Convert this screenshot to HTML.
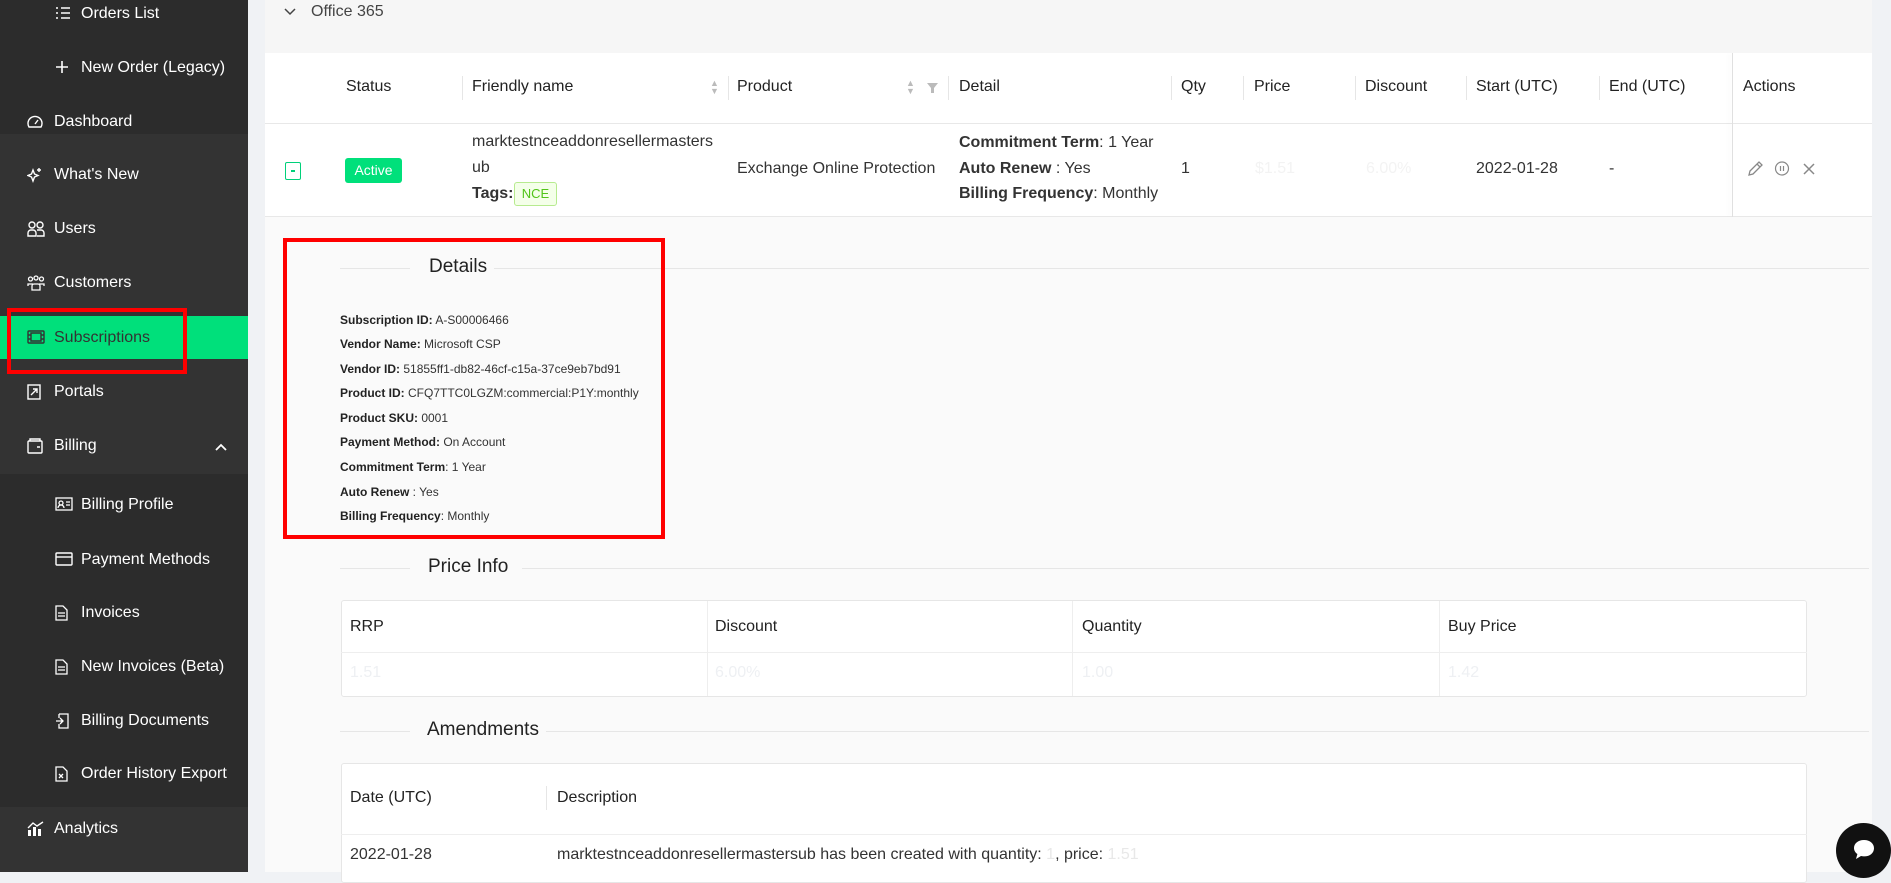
<!DOCTYPE html>
<html><head><meta charset="utf-8"><style>
*{margin:0;padding:0;box-sizing:border-box}
body{width:1891px;height:872px;overflow:hidden;background:#f0f2f5;font-family:"Liberation Sans",sans-serif;color:#222;position:relative}
.a{position:absolute;white-space:nowrap}
#sb{position:absolute;left:0;top:0;width:248px;height:872px;background:#333}
.si{position:absolute;left:0;width:248px;height:44px;color:#fff;font-size:16px;line-height:44px}
.si svg{position:absolute;top:14px}
.hd{font-size:16px;color:#222}
.sep{position:absolute;width:1px;background:#e6e6e6}
.dl{font-size:12px;color:#333}
.dl b{color:#222}
</style></head><body>
<div id="sb">
 <div class="a" style="left:0;top:0;width:248px;height:134px;background:#2c2c2c"></div>
 <div class="a" style="left:0;top:474px;width:248px;height:333px;background:#2c2c2c"></div>
 <div class="si" style="top:-8px"><svg style="left:55px" width="16" height="14" viewBox="0 0 16 14" fill="none" stroke="#fff" stroke-width="1.6"><path d="M1 2h2M6 2h9M1 7h2M6 7h9M1 12h2M6 12h9"/></svg><span style="position:absolute;left:81px">Orders List</span></div>
 <div class="si" style="top:46px"><svg style="left:55px" width="14" height="14" viewBox="0 0 14 14" stroke="#fff" stroke-width="1.6"><path d="M7 1v12M1 7h12"/></svg><span style="position:absolute;left:81px">New Order (Legacy)</span></div>
 <div class="si" style="top:100px"><svg style="left:27px" width="16" height="16" viewBox="0 0 16 16" fill="none" stroke="#fff" stroke-width="1.4"><path d="M2 13a7 7 0 1 1 12 0z"/><path d="M8 10l3-4"/></svg><span style="position:absolute;left:54px">Dashboard</span></div>
 <div class="si" style="top:153px"><svg style="left:27px" width="16" height="16" viewBox="0 0 16 16" fill="none" stroke="#fff" stroke-width="1.4"><path d="M6 3l1.5 4L11 8.5 7.5 10 6 14 4.5 10 1 8.5 4.5 7z"/><path d="M12 1v4M10 3h4"/></svg><span style="position:absolute;left:54px">What's New</span></div>
 <div class="si" style="top:207px"><svg style="left:27px" width="18" height="16" viewBox="0 0 18 16" fill="none" stroke="#fff" stroke-width="1.4"><circle cx="5" cy="4" r="3"/><circle cx="13" cy="4" r="3"/><path d="M1 15v-3a3 3 0 0 1 3-3h2a3 3 0 0 1 3 3v3zM10 9h4a3 3 0 0 1 3 3v3h-7"/></svg><span style="position:absolute;left:54px">Users</span></div>
 <div class="si" style="top:261px"><svg style="left:27px" width="18" height="16" viewBox="0 0 18 16" fill="none" stroke="#fff" stroke-width="1.3"><circle cx="3.5" cy="4" r="2"/><circle cx="9" cy="3" r="2"/><circle cx="14.5" cy="4" r="2"/><path d="M1 11v-2h5M12 9h5v2M5 15v-4a2 2 0 0 1 2-2h4a2 2 0 0 1 2 2v4z"/></svg><span style="position:absolute;left:54px">Customers</span></div>
 <div class="a" style="left:0;top:316px;width:248px;height:43px;background:#00e07b"></div>
 <div class="si" style="top:316px;color:#333"><svg style="left:27px" width="18" height="14" viewBox="0 0 18 14" fill="none" stroke="#333" stroke-width="1.4"><rect x="1" y="1" width="16" height="12" rx="1"/><path d="M1 5h3M14 5h3M1 9h3M14 9h3M4 3h10v8H4z"/></svg><span style="position:absolute;left:54px">Subscriptions</span></div>
 <div class="a" style="left:7px;top:308px;width:180px;height:66px;border:4px solid #f00"></div>
 <div class="si" style="top:370px"><svg style="left:27px" width="14" height="16" viewBox="0 0 14 16" fill="none" stroke="#fff" stroke-width="1.4"><rect x="1" y="1" width="12" height="14"/><path d="M4 11l6-6M6 5h4v4"/></svg><span style="position:absolute;left:54px">Portals</span></div>
 <div class="si" style="top:424px"><svg style="left:27px" width="16" height="16" viewBox="0 0 16 16" fill="none" stroke="#fff" stroke-width="1.4"><rect x="1" y="3" width="14" height="12" rx="1"/><path d="M3 3V1h10v2M10 9h3"/></svg><span style="position:absolute;left:54px">Billing</span><svg style="left:215px;top:19px" width="12" height="8" viewBox="0 0 12 8" fill="none" stroke="#fff" stroke-width="1.8"><path d="M1 7l5-5 5 5"/></svg></div>
 <div class="si" style="top:483px"><svg style="left:55px" width="18" height="14" viewBox="0 0 18 14" fill="none" stroke="#fff" stroke-width="1.3"><rect x="1" y="1" width="16" height="12"/><circle cx="6" cy="6" r="2"/><path d="M3 11a3 3 0 0 1 6 0M11 5h4M11 8h4"/></svg><span style="position:absolute;left:81px">Billing Profile</span></div>
 <div class="si" style="top:538px"><svg style="left:55px" width="18" height="14" viewBox="0 0 18 14" fill="none" stroke="#fff" stroke-width="1.4"><rect x="1" y="1" width="16" height="12" rx="1"/><path d="M1 5h16"/></svg><span style="position:absolute;left:81px">Payment Methods</span></div>
 <div class="si" style="top:591px"><svg style="left:55px" width="13" height="16" viewBox="0 0 13 16" fill="none" stroke="#fff" stroke-width="1.3"><path d="M1 1h7l4 4v10H1z"/><path d="M3 8h7M3 11h7"/></svg><span style="position:absolute;left:81px">Invoices</span></div>
 <div class="si" style="top:645px"><svg style="left:55px" width="13" height="16" viewBox="0 0 13 16" fill="none" stroke="#fff" stroke-width="1.3"><path d="M1 1h7l4 4v10H1z"/><path d="M3 8h7M3 11h7"/></svg><span style="position:absolute;left:81px">New Invoices (Beta)</span></div>
 <div class="si" style="top:699px"><svg style="left:55px" width="14" height="16" viewBox="0 0 14 16" fill="none" stroke="#fff" stroke-width="1.3"><path d="M4 1h9v14H4v-4M4 5V1"/><path d="M1 8h7M5 5l3 3-3 3"/></svg><span style="position:absolute;left:81px">Billing Documents</span></div>
 <div class="si" style="top:752px"><svg style="left:55px" width="13" height="16" viewBox="0 0 13 16" fill="none" stroke="#fff" stroke-width="1.3"><path d="M1 1h7l4 4v10H1z"/><path d="M4 8l4 4M8 8l-4 4"/></svg><span style="position:absolute;left:81px">Order History Export</span></div>
 <div class="si" style="top:807px"><svg style="left:27px" width="18" height="16" viewBox="0 0 18 16" fill="#fff"><rect x="1" y="9" width="3" height="6"/><rect x="6" y="6" width="3" height="9"/><rect x="11" y="8" width="3" height="7"/><path d="M1 7l5-5 4 3 6-4" stroke="#fff" stroke-width="1.4" fill="none"/></svg><span style="position:absolute;left:54px">Analytics</span></div>
</div>

<div class="a" style="left:265px;top:0;width:1607px;height:872px;background:#fafafa"></div>
<div class="a" style="left:265px;top:0;width:1607px;height:53px;background:#f6f6f6"></div>
<svg class="a" style="left:284px;top:8px" width="12" height="8" viewBox="0 0 12 8" fill="none" stroke="#444" stroke-width="1.5"><path d="M1 1l5 5 5-5"/></svg>
<div class="a" style="left:311px;top:3px;font-size:16px;color:#444">Office 365</div>

<div class="a" style="left:265px;top:53px;width:1607px;height:164px;background:#fff;border-bottom:1px solid #e8e8e8"></div>
<div class="a" style="left:265px;top:123px;width:1607px;height:1px;background:#e8e8e8"></div>
<div class="a" style="left:1732px;top:53px;width:1px;height:164px;background:#e0e0e0;box-shadow:-3px 0 5px rgba(0,0,0,.06)"></div>
<div class="sep" style="left:462px;top:76px;height:24px"></div>
<div class="sep" style="left:728px;top:76px;height:24px"></div>
<div class="sep" style="left:948px;top:76px;height:24px"></div>
<div class="sep" style="left:1171px;top:76px;height:24px"></div>
<div class="sep" style="left:1243px;top:76px;height:24px"></div>
<div class="sep" style="left:1355px;top:76px;height:24px"></div>
<div class="sep" style="left:1466px;top:76px;height:24px"></div>
<div class="sep" style="left:1599px;top:76px;height:24px"></div>
<div class="a hd" style="left:346px;top:78px">Status</div>
<div class="a hd" style="left:472px;top:78px">Friendly name</div>
<div class="a" style="left:710px;top:79px;font-size:9px;color:#bbb;line-height:8px">▲<br>▼</div>
<div class="a hd" style="left:737px;top:78px">Product</div>
<div class="a" style="left:906px;top:79px;font-size:9px;color:#bbb;line-height:8px">▲<br>▼</div>
<svg class="a" style="left:927px;top:83px" width="11" height="10" viewBox="0 0 11 10" fill="#bbb"><path d="M0 0h11L7 5v5H4V5z"/></svg>
<div class="a hd" style="left:959px;top:78px">Detail</div>
<div class="a hd" style="left:1181px;top:78px">Qty</div>
<div class="a hd" style="left:1254px;top:78px">Price</div>
<div class="a hd" style="left:1365px;top:78px">Discount</div>
<div class="a hd" style="left:1476px;top:78px">Start (UTC)</div>
<div class="a hd" style="left:1609px;top:78px">End (UTC)</div>
<div class="a hd" style="left:1743px;top:78px">Actions</div>

<div class="a" style="left:285px;top:162px;width:16px;height:18px;border:1px solid #00d07a;border-radius:2px"></div>
<div class="a" style="left:291px;top:170px;width:4px;height:1.5px;background:#00d07a"></div>
<div class="a" style="left:345px;top:158px;width:57px;height:25px;background:#00e07b;border-radius:3px;color:#fff;font-size:14px;line-height:25px;text-align:center">Active</div>
<div class="a" style="left:472px;top:133px;font-size:16px;color:#333">marktestnceaddonresellermasters</div>
<div class="a" style="left:472px;top:159px;font-size:16px;color:#333">ub</div>
<div class="a" style="left:472px;top:185px;font-size:16px;font-weight:bold;color:#333">Tags:</div>
<div class="a" style="left:514px;top:182px;width:43px;height:24px;background:#f4ffe9;border:1px solid #b7eb8f;border-radius:3px;color:#52c41a;font-size:13px;line-height:22px;text-align:center">NCE</div>
<div class="a" style="left:737px;top:160px;font-size:16px;color:#333">Exchange Online Protection</div>
<div class="a" style="left:959px;top:134px;font-size:16px;color:#333"><b>Commitment Term</b>: 1 Year</div>
<div class="a" style="left:959px;top:160px;font-size:16px;color:#333"><b>Auto Renew</b> : Yes</div>
<div class="a" style="left:959px;top:185px;font-size:16px;color:#333"><b>Billing Frequency</b>: Monthly</div>
<div class="a" style="left:1181px;top:160px;font-size:16px;color:#333">1</div>
<div class="a" style="left:1255px;top:160px;font-size:16px;color:#f3f3f3">$1.51</div>
<div class="a" style="left:1366px;top:160px;font-size:16px;color:#f3f3f3">6.00%</div>
<div class="a" style="left:1476px;top:160px;font-size:16px;color:#333">2022-01-28</div>
<div class="a" style="left:1609px;top:160px;font-size:16px;color:#333">-</div>
<svg class="a" style="left:1747px;top:160px" width="16" height="17" viewBox="0 0 16 17" fill="none" stroke="#888" stroke-width="1.3"><path d="M2 15l1-4 9-9 3 3-9 9zM10 4l3 3"/></svg>
<svg class="a" style="left:1774px;top:160px" width="16" height="17" viewBox="0 0 16 17" fill="none" stroke="#888" stroke-width="1.2"><circle cx="8" cy="8.5" r="6.5"/><path d="M6.5 6v5M9.5 6v5"/></svg>
<svg class="a" style="left:1803px;top:163px" width="12" height="12" viewBox="0 0 12 12" stroke="#888" stroke-width="1.5"><path d="M1 1l10 10M11 1L1 11"/></svg>

<div class="a" style="left:340px;top:268px;width:70px;height:1px;background:#e6e6e6"></div>
<div class="a" style="left:494px;top:268px;width:1375px;height:1px;background:#e6e6e6"></div>
<div class="a" style="left:429px;top:256px;font-size:19px;color:#222">Details</div>
<div class="a dl" style="left:340px;top:313px"><b>Subscription ID:</b> A-S00006466</div>
<div class="a dl" style="left:340px;top:337px"><b>Vendor Name:</b> Microsoft CSP</div>
<div class="a dl" style="left:340px;top:362px"><b>Vendor ID:</b> 51855ff1-db82-46cf-c15a-37ce9eb7bd91</div>
<div class="a dl" style="left:340px;top:386px"><b>Product ID:</b> CFQ7TTC0LGZM:commercial:P1Y:monthly</div>
<div class="a dl" style="left:340px;top:411px"><b>Product SKU:</b> 0001</div>
<div class="a dl" style="left:340px;top:435px"><b>Payment Method:</b> On Account</div>
<div class="a dl" style="left:340px;top:460px"><b>Commitment Term</b>: 1 Year</div>
<div class="a dl" style="left:340px;top:485px"><b>Auto Renew</b> : Yes</div>
<div class="a dl" style="left:340px;top:509px"><b>Billing Frequency</b>: Monthly</div>
<div class="a" style="left:283px;top:238px;width:382px;height:301px;border:4px solid #f00"></div>

<div class="a" style="left:340px;top:568px;width:70px;height:1px;background:#e6e6e6"></div>
<div class="a" style="left:522px;top:568px;width:1347px;height:1px;background:#e6e6e6"></div>
<div class="a" style="left:428px;top:556px;font-size:19px;color:#222">Price Info</div>
<div class="a" style="left:341px;top:600px;width:1466px;height:97px;background:#fff;border:1px solid #e6e6e6;border-radius:3px"></div>
<div class="a" style="left:341px;top:652px;width:1466px;height:1px;background:#eee"></div>
<div class="sep" style="left:707px;top:601px;height:95px;background:#eee"></div>
<div class="sep" style="left:1072px;top:601px;height:95px;background:#eee"></div>
<div class="sep" style="left:1439px;top:601px;height:95px;background:#eee"></div>
<div class="a hd" style="left:350px;top:618px">RRP</div>
<div class="a hd" style="left:715px;top:618px">Discount</div>
<div class="a hd" style="left:1082px;top:618px">Quantity</div>
<div class="a hd" style="left:1448px;top:618px">Buy Price</div>
<div class="a" style="left:350px;top:664px;font-size:16px;color:#eef0f3">1.51</div>
<div class="a" style="left:715px;top:664px;font-size:16px;color:#eef0f3">6.00%</div>
<div class="a" style="left:1082px;top:664px;font-size:16px;color:#eef0f3">1.00</div>
<div class="a" style="left:1448px;top:664px;font-size:16px;color:#eef0f3">1.42</div>

<div class="a" style="left:340px;top:731px;width:70px;height:1px;background:#e6e6e6"></div>
<div class="a" style="left:546px;top:731px;width:1323px;height:1px;background:#e6e6e6"></div>
<div class="a" style="left:427px;top:719px;font-size:19px;color:#222">Amendments</div>
<div class="a" style="left:341px;top:763px;width:1466px;height:120px;background:#fff;border:1px solid #e6e6e6;border-radius:3px"></div>
<div class="a" style="left:341px;top:834px;width:1466px;height:1px;background:#eee"></div>
<div class="sep" style="left:546px;top:786px;height:24px"></div>
<div class="a hd" style="left:350px;top:789px">Date (UTC)</div>
<div class="a hd" style="left:557px;top:789px">Description</div>
<div class="a" style="left:350px;top:846px;font-size:16px;color:#333">2022-01-28</div>
<div class="a" style="left:557px;top:846px;font-size:16px;color:#333">marktestnceaddonresellermastersub has been created with quantity: <span style="color:#e8e8e8">1</span>, price: <span style="color:#e8e8e8">1.51</span></div>

<div class="a" style="left:1836px;top:823px;width:55px;height:55px;border-radius:50%;background:#111"></div>
<svg class="a" style="left:1852px;top:838px" width="24" height="24" viewBox="0 0 24 24" fill="#fff"><path d="M12 2C6 2 2 5.5 2 10c0 2.5 1.3 4.6 3.4 6L4 21l5-3c1 .3 2 .4 3 .4 6 0 10-3.6 10-8.2S18 2 12 2z"/></svg>
</body></html>
